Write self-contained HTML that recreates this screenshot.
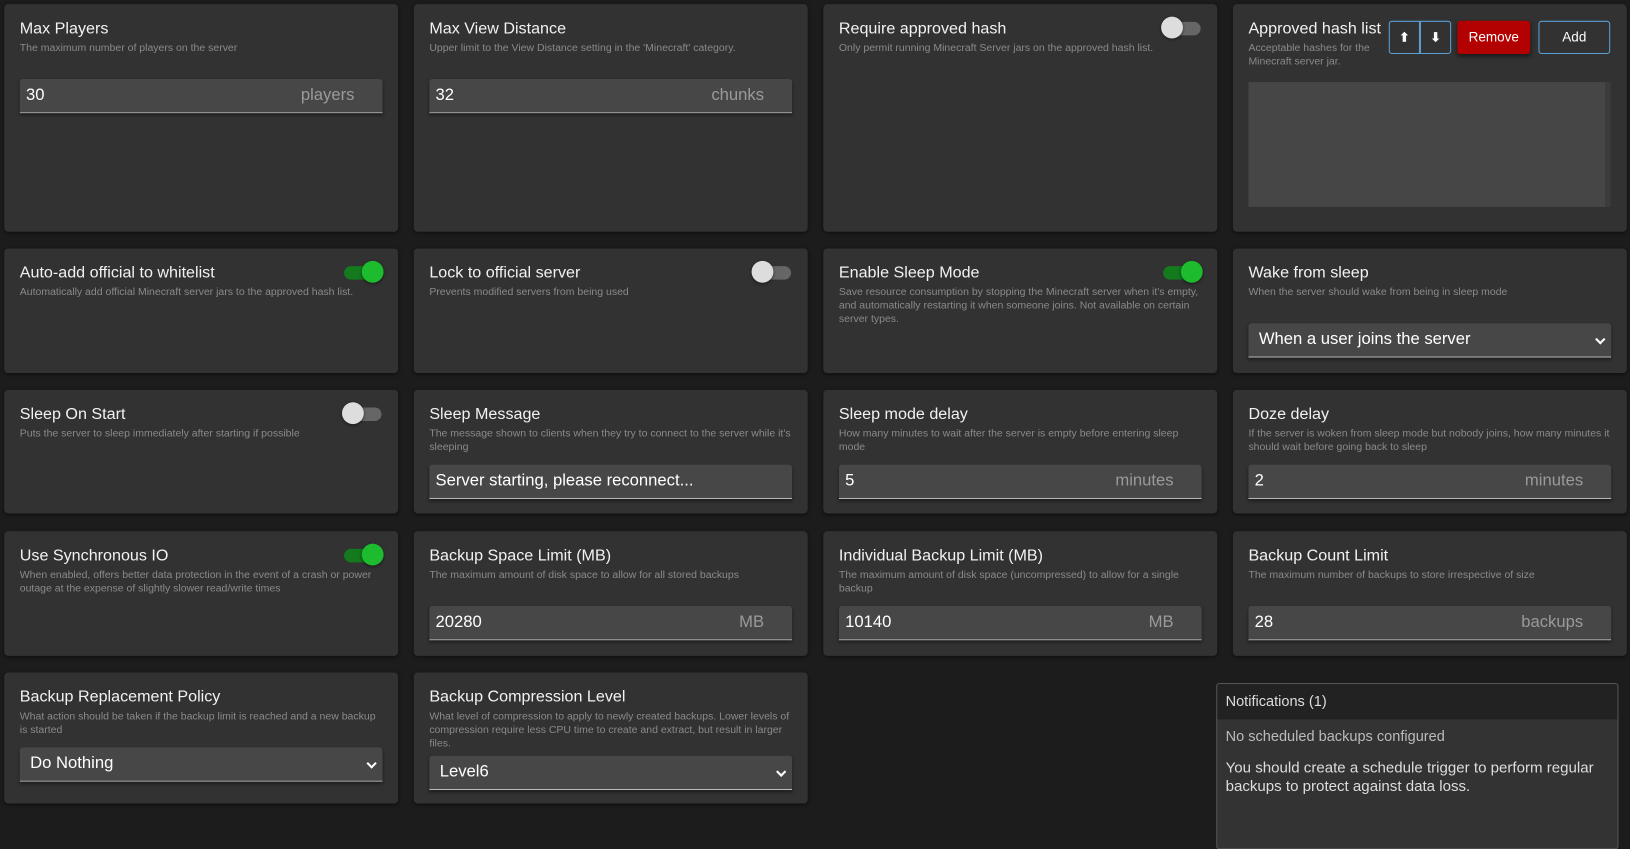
<!DOCTYPE html>
<html><head><style>
*{box-sizing:border-box;margin:0;padding:0}
body{width:1630px;height:809px;background:#1c1c1c;font-family:"Liberation Sans",sans-serif;overflow:hidden;color:#fff}
#w{position:relative;width:1568px;height:779px;transform:scale(1.0395);transform-origin:0 0}
.c{position:absolute;background:#323232;border-radius:4px;width:379px;box-shadow:0 1px 3px rgba(0,0,0,.5)}
.t{position:absolute;left:15px;top:15px;font-size:15.5px;color:#f2f2f2}
.d{position:absolute;left:15px;top:36px;right:14px;font-size:10.1px;line-height:13px;color:#8a8a8a}
.in{position:absolute;left:15px;right:15px;height:33px;background:#474747;border-radius:3px 3px 0 0;border-bottom:1px solid #bdbdbd;font-size:16px;color:#fff;padding:7px 6px;box-shadow:0 2px 3px rgba(0,0,0,.4)}
.in .u{position:absolute;right:27px;top:7px;color:#9a9a9a}
.in .ch{position:absolute;right:7px;top:12px;width:7px;height:7px;border-right:2px solid #fff;border-bottom:2px solid #fff;transform:rotate(45deg)}
.tg{position:absolute;right:16px;width:36px;height:22px}
.tg .tr{position:absolute;left:0;top:5px;width:36px;height:13px;border-radius:7px;background:#666}
.tg .k{position:absolute;top:0;width:21px;height:21px;border-radius:50%;background:#ddd;left:-2px;box-shadow:0 1px 3px rgba(0,0,0,.5)}
.tg.on .tr{background:#137a1e}.tg.on .k{background:#1dbb2e;left:17px}
</style></head><body><div id="w">
<div class="c" style="left:4px;top:4px;height:219px"><div class="t">Max Players</div><div class="d">The maximum number of players on the server</div><div class="in" style="top:72px">30<span class="u">players</span></div></div>
<div class="c" style="left:398px;top:4px;height:219px"><div class="t">Max View Distance</div><div class="d">Upper limit to the View Distance setting in the 'Minecraft' category.</div><div class="in" style="top:72px">32<span class="u">chunks</span></div></div>
<div class="c" style="left:792px;top:4px;height:219px"><div class="t">Require approved hash</div><div class="d">Only permit running Minecraft Server jars on the approved hash list.</div><div class="tg" style="top:12px"><div class="tr"></div><div class="k"></div></div></div>
<div class="c" style="left:1186px;top:4px;height:219px"><div class="t">Approved hash list</div><div class="d" style="right:auto;width:130px">Acceptable hashes for the Minecraft server jar.</div>
<div style="position:absolute;left:150px;top:16px;width:30px;height:32px;border:1px solid #5a9fd4;border-radius:3px 0 0 3px;font-size:12px;text-align:center;line-height:30px;font-weight:bold">&#x2B06;</div>
<div style="position:absolute;left:180px;top:16px;width:30px;height:32px;border:1px solid #5a9fd4;border-radius:0 3px 3px 0;font-size:12px;text-align:center;line-height:30px;font-weight:bold">&#x2B07;</div>
<div style="position:absolute;left:216px;top:16px;width:70px;height:32px;background:#b30000;border-radius:3px;font-size:13px;text-align:center;line-height:32px;box-shadow:0 2px 4px rgba(0,0,0,.5)">Remove</div>
<div style="position:absolute;left:294px;top:16px;width:69px;height:32px;border:1px solid #5a9fd4;border-radius:3px;font-size:13px;text-align:center;line-height:30px">Add</div>
<div style="position:absolute;left:15px;top:75px;width:348px;height:120px;background:#464646"><div style="position:absolute;right:0;top:0;width:5px;height:120px;background:#3c3c3c"></div></div></div>
<div class="c" style="left:4px;top:239px;height:120px"><div class="t">Auto-add official to whitelist</div><div class="d">Automatically add official Minecraft server jars to the approved hash list.</div><div class="tg on" style="top:12px"><div class="tr"></div><div class="k"></div></div></div>
<div class="c" style="left:398px;top:239px;height:120px"><div class="t">Lock to official server</div><div class="d">Prevents modified servers from being used</div><div class="tg" style="top:12px"><div class="tr"></div><div class="k"></div></div></div>
<div class="c" style="left:792px;top:239px;height:120px"><div class="t">Enable Sleep Mode</div><div class="d">Save resource consumption by stopping the Minecraft server when it's empty, and automatically restarting it when someone joins. Not available on certain server types.</div><div class="tg on" style="top:12px"><div class="tr"></div><div class="k"></div></div></div>
<div class="c" style="left:1186px;top:239px;height:120px"><div class="t">Wake from sleep</div><div class="d">When the server should wake from being in sleep mode</div><div class="in" style="top:72px;padding-left:10px">When a user joins the server<span class="ch"></span></div></div>
<div class="c" style="left:4px;top:375px;height:119px"><div class="t">Sleep On Start</div><div class="d">Puts the server to sleep immediately after starting if possible</div><div class="tg" style="top:12px"><div class="tr"></div><div class="k"></div></div></div>
<div class="c" style="left:398px;top:375px;height:119px"><div class="t">Sleep Message</div><div class="d">The message shown to clients when they try to connect to the server while it's sleeping</div><div class="in" style="top:72px">Server starting, please reconnect...</div></div>
<div class="c" style="left:792px;top:375px;height:119px"><div class="t">Sleep mode delay</div><div class="d">How many minutes to wait after the server is empty before entering sleep mode</div><div class="in" style="top:72px">5<span class="u">minutes</span></div></div>
<div class="c" style="left:1186px;top:375px;height:119px"><div class="t">Doze delay</div><div class="d">If the server is woken from sleep mode but nobody joins, how many minutes it should wait before going back to sleep</div><div class="in" style="top:72px">2<span class="u">minutes</span></div></div>
<div class="c" style="left:4px;top:511px;height:120px"><div class="t">Use Synchronous IO</div><div class="d">When enabled, offers better data protection in the event of a crash or power outage at the expense of slightly slower read/write times</div><div class="tg on" style="top:12px"><div class="tr"></div><div class="k"></div></div></div>
<div class="c" style="left:398px;top:511px;height:120px"><div class="t">Backup Space Limit (MB)</div><div class="d">The maximum amount of disk space to allow for all stored backups</div><div class="in" style="top:72px">20280<span class="u">MB</span></div></div>
<div class="c" style="left:792px;top:511px;height:120px"><div class="t">Individual Backup Limit (MB)</div><div class="d">The maximum amount of disk space (uncompressed) to allow for a single backup</div><div class="in" style="top:72px">10140<span class="u">MB</span></div></div>
<div class="c" style="left:1186px;top:511px;height:120px"><div class="t">Backup Count Limit</div><div class="d">The maximum number of backups to store irrespective of size</div><div class="in" style="top:72px">28<span class="u">backups</span></div></div>
<div class="c" style="left:4px;top:647px;height:126px"><div class="t">Backup Replacement Policy</div><div class="d">What action should be taken if the backup limit is reached and a new backup is started</div><div class="in" style="top:72px;padding-left:10px">Do Nothing<span class="ch"></span></div></div>
<div class="c" style="left:398px;top:647px;height:126px"><div class="t">Backup Compression Level</div><div class="d">What level of compression to apply to newly created backups. Lower levels of compression require less CPU time to create and extract, but result in larger files.</div><div class="in" style="top:80px;padding-left:10px">Level6<span class="ch"></span></div></div>
<div style="position:absolute;left:1170px;top:657px;width:387px;height:160px;border:1px solid #555;border-radius:3px;background:#333;overflow:hidden">
<div style="height:34px;background:#222;font-size:14px;color:#ddd;padding:8px 8px">Notifications (1)</div>
<div style="padding:8px 8px;font-size:14px;color:#bbb">No scheduled backups configured</div>
<div style="padding:6px 8px;font-size:14.5px;color:#ddd;line-height:18px">You should create a schedule trigger to perform regular backups to protect against data loss.</div>
</div>
</div></body></html>
